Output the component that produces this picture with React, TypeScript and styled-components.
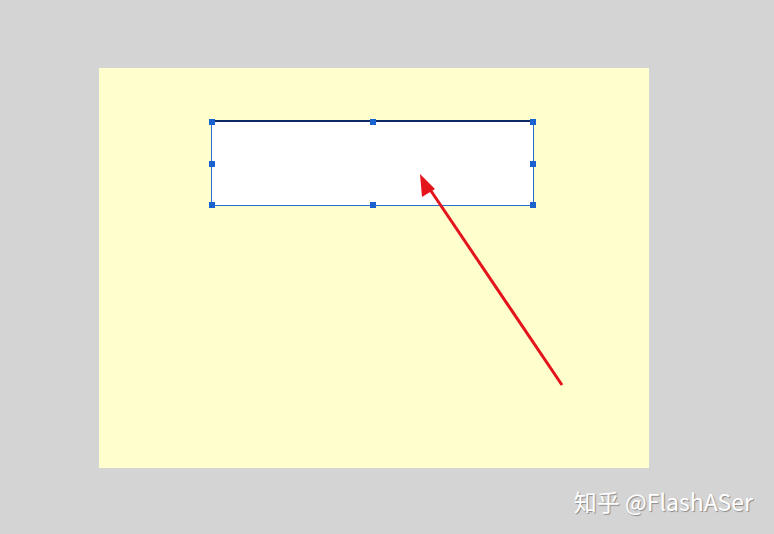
import React from "react";
import styled, { createGlobalStyle } from "styled-components";

const GlobalStyle = createGlobalStyle`
  html, body {
    margin: 0;
    padding: 0;
    background: #d4d4d4;
  }
`;

const Page = styled.div`
  position: relative;
  width: 774px;
  height: 534px;
  padding: 68px 0 0 99px;
  box-sizing: border-box;
  background: #d4d4d4;
  overflow: hidden;
`;

const Stage = styled.div`
  position: relative;
  width: 550px;
  height: 400px;
  background: #ffffcd;
`;

// selected text box sits on the stage canvas
const Selection = styled.div`
  position: absolute;
  left: 112px;
  top: 52px;
  width: 321px;
  height: 83px;
  background: #ffffff;
  border: 1px solid #2a6fd2;
  border-top: 2px solid #0d2a66;
`;

const Handle = styled.span<{ $x: number; $y: number }>`
  position: absolute;
  left: ${(p) => p.$x}%;
  top: ${(p) => p.$y}%;
  width: 6px;
  height: 6px;
  margin: -3px 0 0 -3px;
  background: #1a62d0;
`;

const Arrow = styled.svg`
  position: absolute;
  left: 0;
  top: 0;
  pointer-events: none;
`;

const Watermark = styled.div`
  position: absolute;
  right: 21px;
  bottom: 21px;
  font-family: "Noto Sans CJK SC", "Noto Sans", sans-serif;
  font-size: 23px;
  line-height: 1;
  color: #ffffff;
  text-shadow: 1px 1px 1px rgba(0, 0, 0, 0.35);
`;

const handles = [
  [0, 0],
  [50, 0],
  [100, 0],
  [0, 50],
  [100, 50],
  [0, 100],
  [50, 100],
  [100, 100],
];

export default function App() {
  return (
    <>
      <GlobalStyle />
      <Page>
        <Stage>
          <Selection>
            {handles.map(([x, y]) => (
              <Handle key={`${x}-${y}`} $x={x} $y={y} />
            ))}
          </Selection>
        </Stage>
        <Arrow width="774" height="534" viewBox="0 0 774 534">
          <line x1="562" y1="385" x2="427" y2="185" stroke="#e3141b" strokeWidth="3" />
          <polygon points="420,174 435,189 422,197" fill="#e3141b" />
        </Arrow>
        <Watermark>知乎 @FlashASer</Watermark>
      </Page>
    </>
  );
}
